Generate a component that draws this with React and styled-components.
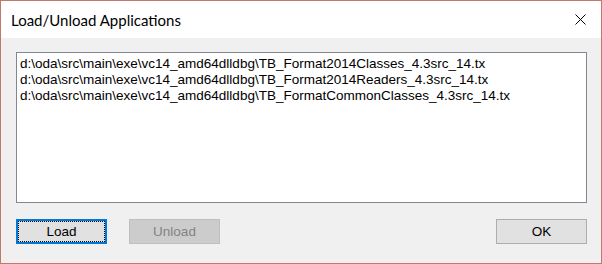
import React from "react";
import styled, { createGlobalStyle } from "styled-components";

const GlobalStyle = createGlobalStyle`
  html, body {
    margin: 0;
    padding: 0;
    background: #ffffff;
  }
`;

const Window = styled.div`
  width: 602px;
  height: 264px;
  box-sizing: border-box;
  border: 1px solid #c4776c;
  display: flex;
  flex-direction: column;
  background: #f0f0f0;
  font-family: "Liberation Sans", Arial, sans-serif;
`;

const TitleBar = styled.div`
  height: 37px;
  background: #ffffff;
  display: flex;
  align-items: center;
  justify-content: space-between;
  padding: 0 0 0 10px;
`;

const Title = styled.span`
  font-family: Lato, "Open Sans", sans-serif;
  font-size: 15px;
  color: #000000;
`;

const CloseButton = styled.div`
  width: 42px;
  height: 37px;
  display: flex;
  align-items: center;
  justify-content: center;
`;

const Body = styled.div`
  flex: 1;
  display: flex;
  flex-direction: column;
  padding: 14px 14px 0 15px;
`;

const ListBox = styled.div`
  height: 151px;
  box-sizing: border-box;
  background: #ffffff;
  border: 1px solid #828790;
  padding: 3px 3px;
`;

const Item = styled.div`
  font-size: 13.5px;
  line-height: 16px;
  height: 16px;
  color: #000000;
  white-space: nowrap;
`;

const ButtonRow = styled.div`
  display: flex;
  align-items: center;
  margin-top: 16px;
`;

const Button = styled.button`
  width: ${(p) => p.$w || 91}px;
  height: 25px;
  margin-right: ${(p) => p.$gap || 0}px;
  box-sizing: border-box;
  border: 1px solid ${(p) => (p.$focused ? "#0078d7" : p.disabled ? "#bfbfbf" : "#adadad")};
  background: ${(p) => (p.disabled ? "#cccccc" : "#e1e1e1")};
  color: ${(p) => (p.disabled ? "#838383" : "#000000")};
  font-family: "Liberation Sans", Arial, sans-serif;
  font-size: 13.5px;
  padding: 0;
  outline: ${(p) => (p.$focused ? "1px dotted #000000" : "none")};
  outline-offset: -3px;
  box-shadow: ${(p) => (p.$focused ? "inset 0 0 0 1px #0078d7" : "none")};
`;

const Spacer = styled.div`
  flex: 1;
`;

const items = [
  "d:\\oda\\src\\main\\exe\\vc14_amd64dlldbg\\TB_Format2014Classes_4.3src_14.tx",
  "d:\\oda\\src\\main\\exe\\vc14_amd64dlldbg\\TB_Format2014Readers_4.3src_14.tx",
  "d:\\oda\\src\\main\\exe\\vc14_amd64dlldbg\\TB_FormatCommonClasses_4.3src_14.tx",
];

export default function App() {
  return (
    <>
      <GlobalStyle />
      <Window>
        <TitleBar>
          <Title>Load/Unload Applications</Title>
          <CloseButton>
            <svg width="11" height="11" viewBox="0 0 11 11">
              <path d="M0.5 0.5 L10.5 10.5 M10.5 0.5 L0.5 10.5" stroke="#000" strokeWidth="1" />
            </svg>
          </CloseButton>
        </TitleBar>
        <Body>
          <ListBox>
            {items.map((t) => (
              <Item key={t}>{t}</Item>
            ))}
          </ListBox>
          <ButtonRow>
            <Button $focused $gap={22}>Load</Button>
            <Button disabled>Unload</Button>
            <Spacer />
            <Button>OK</Button>
          </ButtonRow>
        </Body>
      </Window>
    </>
  );
}
